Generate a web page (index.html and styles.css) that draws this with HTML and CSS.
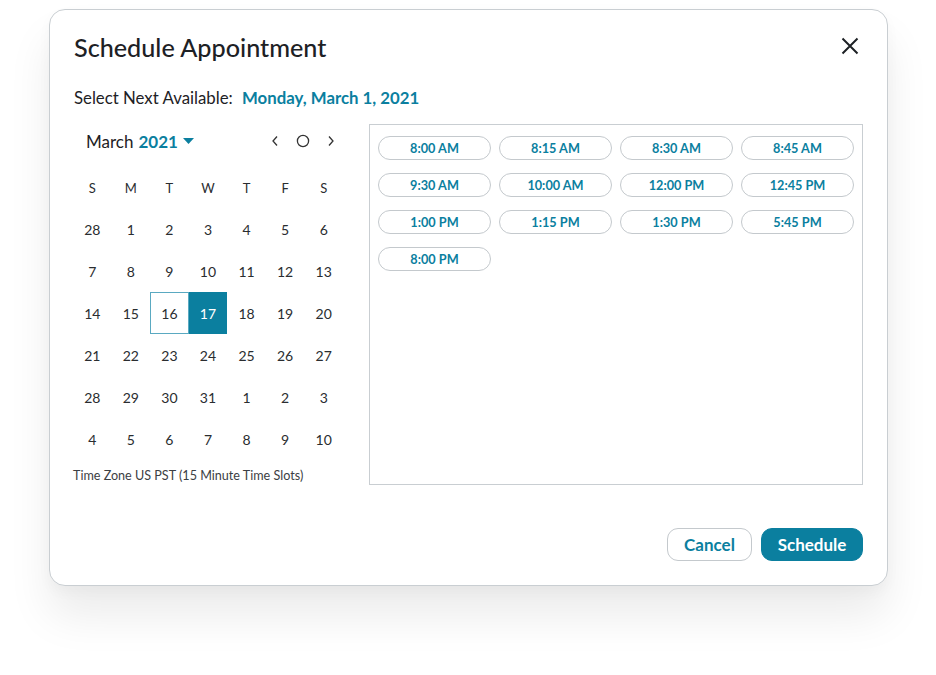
FILE: index.html
```html
<!DOCTYPE html>
<html>
<head>
<meta charset="utf-8">
<link rel="stylesheet" href="styles.css">
</head>
<body>
<div class="modal">
  <div class="modal-head">
    <h1 class="title">Schedule Appointment</h1>
    <button class="close" aria-label="Close">
      <svg width="18" height="18" viewBox="0 0 18 18"><path d="M1.5 1.5 L16.5 16.5 M16.5 1.5 L1.5 16.5" stroke="#1d2125" stroke-width="2" fill="none"/></svg>
    </button>
  </div>
  <div class="next">Select Next Available: <span class="next-date">Monday, March 1, 2021</span></div>
  <div class="body">
    <div class="cal">
      <div class="cal-head">
        <div class="month">March <span class="year">2021</span>
          <svg class="caret" width="11" height="6" viewBox="0 0 11 6"><path d="M0 0 H11 L5.5 6 Z" fill="#0b7f9f"/></svg>
        </div>
        <div class="nav">
          <svg width="8" height="12" viewBox="0 0 8 12"><path d="M6 1.5 L2 6 L6 10.5" stroke="#333" stroke-width="1.3" fill="none"/></svg>
          <svg width="14" height="14" viewBox="0 0 14 14"><circle cx="7" cy="7" r="5.6" stroke="#333" stroke-width="1.3" fill="none"/></svg>
          <svg width="8" height="12" viewBox="0 0 8 12"><path d="M2 1.5 L6 6 L2 10.5" stroke="#333" stroke-width="1.3" fill="none"/></svg>
        </div>
      </div>
      <div class="grid">
        <div class="wd">S</div><div class="wd">M</div><div class="wd">T</div><div class="wd">W</div><div class="wd">T</div><div class="wd">F</div><div class="wd">S</div>
        <div class="d">28</div><div class="d">1</div><div class="d">2</div><div class="d">3</div><div class="d">4</div><div class="d">5</div><div class="d">6</div>
        <div class="d">7</div><div class="d">8</div><div class="d">9</div><div class="d">10</div><div class="d">11</div><div class="d">12</div><div class="d">13</div>
        <div class="d">14</div><div class="d">15</div><div class="d today">16</div><div class="d sel">17</div><div class="d">18</div><div class="d">19</div><div class="d">20</div>
        <div class="d">21</div><div class="d">22</div><div class="d">23</div><div class="d">24</div><div class="d">25</div><div class="d">26</div><div class="d">27</div>
        <div class="d">28</div><div class="d">29</div><div class="d">30</div><div class="d">31</div><div class="d">1</div><div class="d">2</div><div class="d">3</div>
        <div class="d">4</div><div class="d">5</div><div class="d">6</div><div class="d">7</div><div class="d">8</div><div class="d">9</div><div class="d">10</div>
      </div>
      <div class="tz">Time Zone US PST (15 Minute Time Slots)</div>
    </div>
    <div class="slots">
      <div class="slot">8:00 AM</div><div class="slot">8:15 AM</div><div class="slot">8:30 AM</div><div class="slot">8:45 AM</div>
      <div class="slot">9:30 AM</div><div class="slot">10:00 AM</div><div class="slot">12:00 PM</div><div class="slot">12:45 PM</div>
      <div class="slot">1:00 PM</div><div class="slot">1:15 PM</div><div class="slot">1:30 PM</div><div class="slot">5:45 PM</div>
      <div class="slot">8:00 PM</div>
    </div>
  </div>
  <div class="foot">
    <button class="btn btn-ghost">Cancel</button>
    <button class="btn btn-primary">Schedule</button>
  </div>
</div>
</body>
</html>
```
FILE: styles.css
```css
* { box-sizing: border-box; }
html, body { margin: 0; background: #fff; }
body {
  min-height: 675px;
  padding: 9px 48px 0 49px;
  font-family: Lato, "Open Sans", sans-serif;
  color: #1d2125;
}
.modal {
  width: 839px;
  height: 577px;
  border: 1px solid #c9ced2;
  border-radius: 16px;
  background: #fff;
  box-shadow: 0 30px 44px rgba(0, 0, 0, 0.08), 0 6px 14px rgba(0,0,0,0.03);
  padding: 21px 23px 0 24px;
}
.modal-head {
  display: flex;
  justify-content: space-between;
  align-items: center;
}
.title {
  margin: 0;
  font-size: 25.2px;
  line-height: 32px;
  font-weight: 500;
  color: #1d2125;
}
.close {
  border: 0;
  background: none;
  padding: 0;
  margin-right: 5px;
  margin-top: -2px;
  width: 18px;
  height: 18px;
  display: flex;
}
.next {
  margin-top: 25px;
  font-size: 16.8px;
  line-height: 20px;
  color: #1d2125;
}
.next-date {
  margin-left: 5px;
  color: #0b7f9f;
  font-weight: 700;
}
.body {
  margin-top: 16px;
  display: flex;
  gap: 26px;
  align-items: flex-start;
}
.cal { width: 270px; margin-left: -1px; }
.cal-head {
  height: 34px;
  display: flex;
  align-items: center;
  justify-content: space-between;
  padding: 0 8px 0 13px;
}
.month {
  font-size: 17px;
  color: #1d2125;
  display: flex;
  align-items: center;
}
.year {
  color: #0b7f9f;
  font-weight: 700;
  margin-left: 5px;
}
.caret { margin-left: 5px; }
.nav {
  display: flex;
  align-items: center;
  gap: 17px;
}
.nav svg { display: block; }
.grid {
  margin-top: 8px;
  display: grid;
  grid-template-columns: repeat(7, 1fr);
  grid-auto-rows: 42px;
}
.wd, .d {
  display: flex;
  align-items: center;
  justify-content: center;
  font-size: 14px;
  color: #2a2d30;
}
.wd { font-size: 13px; padding-top: 2px; }
.d.today { border: 1px solid #5aa9c1; }
.d.sel { background: #0b7f9f; color: #fff; }
.tz {
  margin-top: 6px;
  font-size: 12.6px;
  line-height: 20px;
  color: #3c4044;
}
.slots {
  width: 494px;
  height: 361px;
  border: 1px solid #c9ced2;
  padding: 11px 8px;
  display: grid;
  grid-template-columns: repeat(4, 113px);
  grid-auto-rows: 24px;
  column-gap: 8px;
  row-gap: 13px;
  align-content: start;
}
.slot {
  border: 1px solid #c4c9cd;
  border-radius: 13px;
  display: flex;
  align-items: center;
  justify-content: center;
  font-size: 12.7px;
  font-weight: 700;
  color: #0b7f9f;
}
.foot {
  margin-top: 42px;
  margin-right: 1px;
  display: flex;
  justify-content: flex-end;
  gap: 9px;
}
.btn {
  height: 33px;
  border-radius: 11px;
  font-family: Lato, "Open Sans", sans-serif;
  font-size: 17px;
  font-weight: 700;
  padding: 0;
}
.btn-ghost {
  width: 85px;
  background: #fff;
  border: 1px solid #c4c9cd;
  color: #0b7f9f;
}
.btn-primary {
  width: 102px;
  background: #0b7f9f;
  border: 1px solid #0b7f9f;
  color: #fff;
}
```
